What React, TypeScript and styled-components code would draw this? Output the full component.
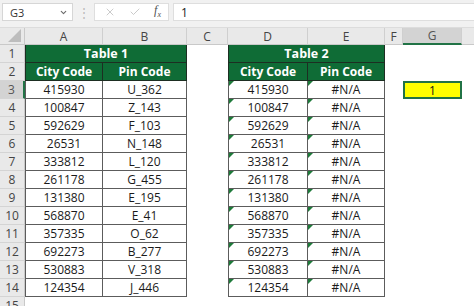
import styled, { createGlobalStyle } from "styled-components";
import { X, Check, ChevronDown } from "lucide-react";

const GlobalStyle = createGlobalStyle`
  html, body {
    margin: 0;
    padding: 0;
    background: #ffffff;
    overflow: hidden;
  }
  body {
    font-family: "Open Sans", "Liberation Sans", sans-serif;
  }
`;

const GREEN = "#0f6c36";
const SELECT = "#217346";

// column widths in px; H runs past the right edge of the window
const columns = ["A", "B", "C", "D", "E", "F", "G", "H"];
const colWidths = "25px 78px 84px 41px 80px 77px 18px 59px 64px";

const rows = [
  ["415930", "U_362"],
  ["100847", "Z_143"],
  ["592629", "F_103"],
  ["26531", "N_148"],
  ["333812", "L_120"],
  ["261178", "G_455"],
  ["131380", "E_195"],
  ["568870", "E_41"],
  ["357335", "O_62"],
  ["692273", "B_277"],
  ["530883", "V_318"],
  ["124354", "J_446"],
];

export default function App() {
  return (
    <Page>
      <GlobalStyle />
      <FormulaBar>
        <NameBox>
          <span>G3</span>
          <ChevronDown size={9} strokeWidth={3} color="#6b6b6b" />
        </NameBox>
        <Grip>⋮</Grip>
        <FuncBox>
          <X size={12} strokeWidth={1.5} color="#b8b8b8" />
          <Check size={12} strokeWidth={1.5} color="#b8b8b8" />
          <Fx>
            f<sub>x</sub>
          </Fx>
        </FuncBox>
        <FormulaInput>1</FormulaInput>
      </FormulaBar>

      <Sheet>
        <Corner>
          <CornerTriangle />
        </Corner>
        {columns.map(c => (
          <ColHeader key={c} $selected={c === "G"}>
            {c}
          </ColHeader>
        ))}

        {/* row 1 */}
        <RowHeader>1</RowHeader>
        <GreenCell $span={2} $first $title>
          Table 1
        </GreenCell>
        <Blank />
        <GreenCell $span={2} $first $title>
          Table 2
        </GreenCell>
        <Blank />
        <Blank />
        <Blank />

        {/* row 2 */}
        <RowHeader>2</RowHeader>
        <GreenCell $first>City Code</GreenCell>
        <GreenCell>Pin Code</GreenCell>
        <Blank />
        <GreenCell $first>City Code</GreenCell>
        <GreenCell>Pin Code</GreenCell>
        <Blank />
        <Blank />
        <Blank />

        {rows.map(([code, pin], i) => (
          <Row key={code} n={i + 3} code={code} pin={pin} />
        ))}

        <RowHeader>15</RowHeader>
        {columns.map(c => (
          <Blank key={"b15" + c} />
        ))}
      </Sheet>
    </Page>
  );
}

function Row({ n, code, pin }: { n: number; code: string; pin: string }) {
  return (
    <>
      <RowHeader $selected={n === 3}>{n}</RowHeader>
      <DataCell $first>{code}</DataCell>
      <DataCell>{pin}</DataCell>
      <Blank />
      <DataCell $first>
        <ErrorMark />
        {code}
      </DataCell>
      <DataCell>
        <ErrorMark />
        #N/A
      </DataCell>
      <Blank />
      {n === 3 ? <ActiveCell>1</ActiveCell> : <Blank />}
      <Blank />
    </>
  );
}

const Page = styled.div`
  width: 474px;
  height: 306px;
  overflow: hidden;
  display: flex;
  flex-direction: column;
  background: #ffffff;
`;

const FormulaBar = styled.div`
  height: 28px;
  flex-shrink: 0;
  box-sizing: border-box;
  padding: 3px 0 6px 2px;
  display: flex;
  align-items: stretch;
  background: #f1f1f1;
  border-bottom: 1px solid #dcdcdc;
`;

const NameBox = styled.div`
  width: 71px;
  box-sizing: border-box;
  background: #ffffff;
  border: 1px solid #d6d6d6;
  display: flex;
  align-items: center;
  justify-content: space-between;
  padding: 0 4px 0 7px;
  font-size: 11px;
  color: #333333;
`;

const Grip = styled.div`
  width: 21px;
  display: flex;
  align-items: center;
  justify-content: center;
  font-size: 12px;
  color: #b9b9b9;
`;

const FuncBox = styled.div`
  width: 75px;
  box-sizing: border-box;
  background: #ffffff;
  border: 1px solid #dedede;
  display: flex;
  align-items: center;
  justify-content: space-between;
  padding: 0 7px 0 9px;
`;

const Fx = styled.span`
  font-family: "Liberation Serif", serif;
  font-style: italic;
  font-size: 12px;
  color: #505050;
  line-height: 1;

  sub {
    font-size: 8px;
  }
`;

const FormulaInput = styled.div`
  flex: 1;
  margin-left: 4px;
  background: #ffffff;
  border: 1px solid #dedede;
  border-right: none;
  display: flex;
  align-items: center;
  padding-left: 7px;
  font-size: 12px;
  color: #222222;
`;

const Sheet = styled.div`
  display: grid;
  grid-template-columns: ${colWidths};
  grid-template-rows: 17px repeat(15, 18px);
  font-size: 12px;
  color: #111111;
`;

const HeaderBase = styled.div`
  box-sizing: border-box;
  background: #e9e9e9;
  color: #444444;
  display: flex;
  align-items: center;
  justify-content: center;
  font-size: 12px;
`;

const Corner = styled(HeaderBase)`
  position: relative;
  border-right: 1px solid #c9c9c9;
  border-bottom: 1px solid #c9c9c9;
`;

const CornerTriangle = styled.div`
  position: absolute;
  right: 3px;
  bottom: 2px;
  width: 0;
  height: 0;
  border-left: 13px solid transparent;
  border-bottom: 13px solid #bdbdbd;
`;

const ColHeader = styled(HeaderBase)<{ $selected?: boolean }>`
  border-right: 1px solid #cfcfcf;
  border-bottom: ${p => (p.$selected ? `2px solid ${SELECT}` : "1px solid #c9c9c9")};
  background: ${p => (p.$selected ? "#d3d3d3" : "#e9e9e9")};
  color: ${p => (p.$selected ? "#555555" : "#444444")};
`;

const RowHeader = styled(HeaderBase)<{ $selected?: boolean }>`
  border-bottom: 1px solid #d4d4d4;
  border-right: ${p => (p.$selected ? `2px solid ${SELECT}` : "1px solid #c9c9c9")};
  background: ${p => (p.$selected ? "#d3d3d3" : "#e9e9e9")};
  color: ${p => (p.$selected ? "#555555" : "#444444")};
`;

const Blank = styled.div`
  background: #ffffff;
`;

const CellBase = styled.div<{ $first?: boolean; $span?: number }>`
  position: relative;
  box-sizing: border-box;
  grid-column: span ${p => p.$span ?? 1};
  display: flex;
  align-items: center;
  justify-content: center;
  white-space: nowrap;
  border-right: 1px solid #5c5c5c;
  border-bottom: 1px solid #5c5c5c;
  border-left: ${p => (p.$first ? "1px solid #5c5c5c" : "none")};
`;

const GreenCell = styled(CellBase)<{ $title?: boolean }>`
  background: ${GREEN};
  color: #ffffff;
  font-weight: 700;
  font-size: ${p => (p.$title ? "12.5px" : "12px")};
  border-color: #1d2e22;
`;

const DataCell = styled(CellBase)`
  background: #ffffff;
  color: #1a1a1a;
`;

const ErrorMark = styled.span`
  position: absolute;
  left: 0;
  top: 0;
  width: 0;
  height: 0;
  border-top: 5px solid #1e7b3a;
  border-right: 5px solid transparent;
`;

const ActiveCell = styled.div`
  box-sizing: border-box;
  background: #ffff00;
  border: 2px solid ${SELECT};
  display: flex;
  align-items: center;
  justify-content: center;
  color: #111111;
`;
